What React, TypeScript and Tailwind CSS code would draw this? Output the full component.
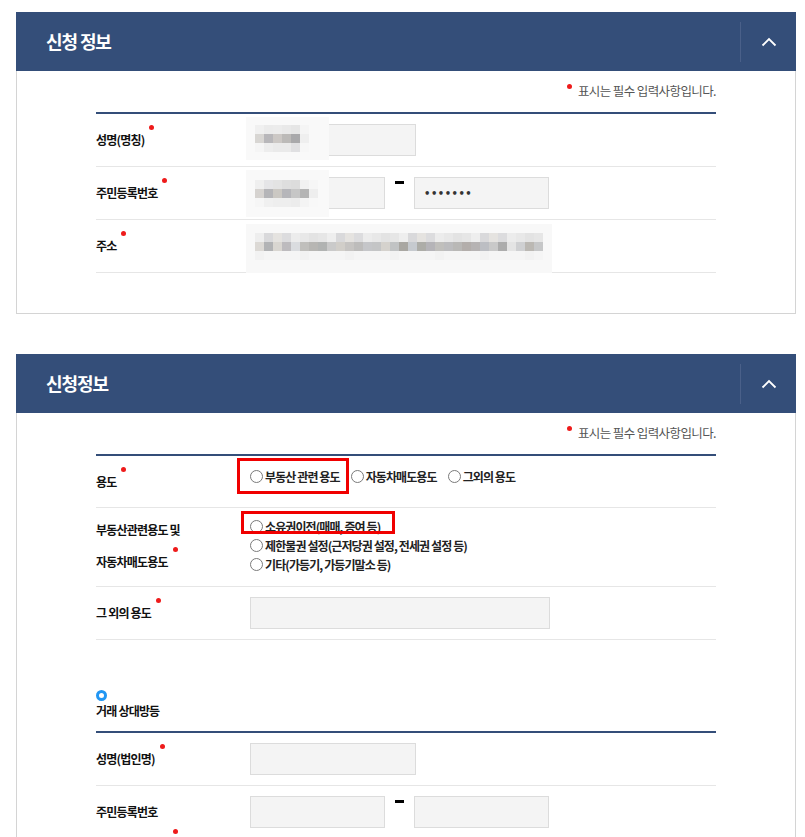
import React from "react";

const F = "font-['Noto_Sans_CJK_KR','Noto_Sans',sans-serif]";

function Dot({ cls = "" }: { cls?: string }) {
  return <span className={"inline-block w-[5px] h-[5px] rounded-full bg-[#ee1b1b] " + cls} />;
}

function Chevron() {
  return (
    <svg width="16" height="10" viewBox="0 0 16 10" fill="none">
      <polyline points="1.5,8.5 8,2 14.5,8.5" stroke="#ffffff" strokeWidth="1.8" />
    </svg>
  );
}

function Header({ title }: { title: string }) {
  return (
    <div className="h-[59px] bg-[#344e79] flex items-center">
      <div className="flex-1 pl-[30px] text-white font-bold text-[18px] tracking-[-1.1px]">{title}</div>
      <div className="w-px h-[40px] bg-[#4a6089]" />
      <div className="w-[55px] flex items-center justify-center">
        <Chevron />
      </div>
    </div>
  );
}

function Note() {
  return (
    <div className="flex justify-end items-center h-[16px] text-[12.5px] text-[#555] tracking-[-0.6px] leading-[16px]">
      <Dot cls="mr-[6px] -mt-[9px]" />
      <span>표시는 필수 입력사항입니다.</span>
    </div>
  );
}

function Label({ w, children }: { w: string; children: React.ReactNode }) {
  return (
    <div className={w + " shrink-0 leading-[32px] text-[12px] font-bold text-[#111] tracking-[-0.8px]"}>{children}</div>
  );
}

function Req() {
  return <span className="inline-block w-[5px] h-[5px] rounded-full bg-[#ee1b1b] ml-[5px] align-[15px]" />;
}

function Input({ w }: { w: string }) {
  return <div className={w + " h-[32px] bg-[#f4f4f4] border border-[#dcdcdc]"} />;
}

function Mosaic({ rows, left }: { rows: string[][]; left: number }) {
  return (
    <div className="flex flex-col" style={{ paddingLeft: left }}>
      {rows.map((r, i) => (
        <div key={i} className="flex">
          {r.map((c, j) => (
            <div key={j} className="w-[9px] h-[9px]" style={{ backgroundColor: c }} />
          ))}
        </div>
      ))}
    </div>
  );
}

const name1 = [
  ["#f0f0f0", "#ebebeb", "#ececec", "#e9e9e9", "#e6e6e6", "#f5f5f5"],
  ["#d8d6d3", "#b8b7ba", "#ccc8c5", "#bcbab8", "#a9a9ab", "#efefef"],
  ["#f5f5f5", "#ededed", "#eaeaea", "#eaeaea", "#e0e0e2", "#f7f7f7"],
];
const id1 = [
  ["#efefef", "#e5e5e7", "#e3e3e3", "#dedede", "#dcdcdc", "#f1f1f1", "#f6f6f6"],
  ["#d6d3d0", "#b5b5b8", "#cbc8c3", "#b6b6ba", "#c6c6c6", "#b4b4b4", "#eeeeee"],
  ["#f6f6f6", "#f0f0f0", "#eeeeee", "#eeeeee", "#ececec", "#f4f4f4", "#f8f8f8"],
];
const midA = [
  "#dcd9d5", "#b2b3b5", "#d9d6d1", "#bdbbbe", "#dadcdf", "#c0bfbc", "#b7b6b3", "#b1b3b2",
  "#cacaca", "#d1cec9", "#c6c4c2", "#bdbcbb", "#c5c6c9", "#c4c5c6", "#d5d2cd", "#c1c3c4",
  "#a9a7a2", "#c6cacf", "#adada8", "#b5b4b8", "#c0bfbc", "#bcbcbe", "#b9b8b6", "#b3aeab",
  "#b6b3b3", "#bcbec3", "#c9c9c9", "#acacac", "#e4e4e4", "#cfd0d2", "#bbb8b3", "#c6c7c8",
];
const topA = midA.map((_, i) =>
  ["#eeeeee", "#d9d9db", "#e5e3e0", "#dcdcde", "#ececec", "#e8e8e8", "#e3e3e3", "#e6e6e6"][i % 8]
);
const botA = midA.map((_, i) => (i % 5 === 0 ? "#f2f2f2" : "#f5f5f5"));
const addr1 = [topA, midA, botA];

function Radio() {
  return <span className="inline-block w-[13px] h-[13px] rounded-full border border-[#7a7a7a] bg-white shrink-0" />;
}

function Opt({ text, cls = "" }: { text: string; cls?: string }) {
  return (
    <span className={"inline-flex items-center " + cls}>
      <Radio />
      <span className="ml-[2px] text-[12px] font-bold text-[#222] tracking-[-0.9px]">{text}</span>
    </span>
  );
}

function Row({ children, cls = "items-start py-[10px]" }: { children: React.ReactNode; cls?: string }) {
  return <div className={"relative flex border-b border-[#e6e6e6] " + cls}>{children}</div>;
}

function Dash() {
  return <div className="w-[9px] h-[3px] bg-black mx-[10px] mt-[4px] shrink-0" />;
}

export default function App() {
  return (
    <div className={"min-h-[837px] bg-white pt-[12px] " + F}>
      {/* Panel 1 */}
      <section className="ml-[16px] w-[780px]">
        <Header title="신청 정보" />
        <div className="border-x border-b border-[#d4d4d4] px-[79px] pt-[12px] pb-[40px]">
          <Note />
          <div className="mt-[13px] border-t-2 border-[#344e79]">
            <Row>
              <Label w="w-[151px]">
                성명(명칭)
                <Req />
              </Label>
              <div className="relative">
                <Input w="w-[169px]" />
                <div className="absolute left-[-1px] top-[-7px] w-[83px] h-[43px] bg-[#f9f9f9] pt-[8px]">
                  <Mosaic rows={name1} left={9} />
                </div>
              </div>
            </Row>
            <Row>
              <Label w="w-[151px]">
                주민등록번호
                <Req />
              </Label>
              <div className="flex items-start">
                <div className="relative">
                  <Input w="w-[138px]" />
                  <div className="absolute left-[-1px] top-[-7px] w-[83px] h-[47px] bg-[#f9f9f9] pt-[10px]">
                    <Mosaic rows={id1} left={9} />
                  </div>
                </div>
                <Dash />
                <div className="w-[135px] h-[32px] bg-[#f4f4f4] border border-[#dcdcdc] flex items-center pl-[9px] text-[#333] text-[10px] tracking-[0.5px] font-['DejaVu_Sans',sans-serif] font-bold">
                  •••••••
                </div>
              </div>
            </Row>
            <Row>
              <Label w="w-[151px]">
                주소
                <Req />
              </Label>
              <div className="relative w-[305px] h-[32px]">
                <div className="absolute left-[-1px] top-[-6px] w-[306px] h-[49px] bg-[#f8f8f8] pt-[9px]">
                  <Mosaic rows={addr1} left={9} />
                </div>
              </div>
            </Row>
          </div>
        </div>
      </section>

      {/* Panel 2 */}
      <section className="ml-[16px] w-[780px] mt-[40px]">
        <Header title="신청정보" />
        <div className="border-x border-b border-[#d4d4d4] px-[79px] pt-[12px] pb-[40px]">
          <Note />
          <div className="mt-[13px] border-t-2 border-[#344e79]">
            <Row cls="items-center h-[52px]">
              <Label w="w-[154px]">
                용도
                <Req />
              </Label>
              <div className="flex items-center pb-[10px]">
                <Opt text="부동산 관련 용도" />
                <Opt text="자동차매도용도" cls="ml-[11px]" />
                <Opt text="그외의 용도" cls="ml-[11px]" />
              </div>
              <div className="absolute left-[141px] top-[2px] w-[112px] h-[36px] border-[3px] border-[#f00000]" />
            </Row>
            <Row cls="items-start pt-[6px] pb-[8px]">
              <Label w="w-[154px]">
                부동산관련용도 및
                <br />
                자동차매도용도
                <Req />
              </Label>
              <div className="flex flex-col pt-[3px] leading-[19px]">
                <Opt text="소유권이전(매매, 증여 등)" />
                <Opt text="제한물권 설정(근저당권 설정, 전세권 설정 등)" />
                <Opt text="기타(가등기, 가등기말소 등)" />
              </div>
              <div className="absolute left-[145px] top-[3px] w-[154px] h-[23px] border-[3px] border-[#f00000]" />
            </Row>
            <Row>
              <Label w="w-[154px]">
                그 외의 용도
                <Req />
              </Label>
              <Input w="w-[300px]" />
            </Row>
          </div>

          <div className="mt-[50px]">
            <div className="w-[11px] h-[11px] rounded-full border-[3px] border-[#2196f3]" />
            <div className="leading-[20px] text-[12px] font-bold text-[#111] tracking-[-0.8px]">거래 상대방등</div>
          </div>
          <div className="mt-[10px] border-t-2 border-[#344e79]">
            <Row>
              <Label w="w-[154px]">
                성명(법인명)
                <Req />
              </Label>
              <Input w="w-[166px]" />
            </Row>
            <Row>
              <Label w="w-[154px]">
                주민등록번호
                <br />
                사업자등록번호
                <Req />
              </Label>
              <div className="flex items-start">
                <Input w="w-[135px]" />
                <Dash />
                <Input w="w-[135px]" />
              </div>
            </Row>
          </div>
        </div>
      </section>
    </div>
  );
}
